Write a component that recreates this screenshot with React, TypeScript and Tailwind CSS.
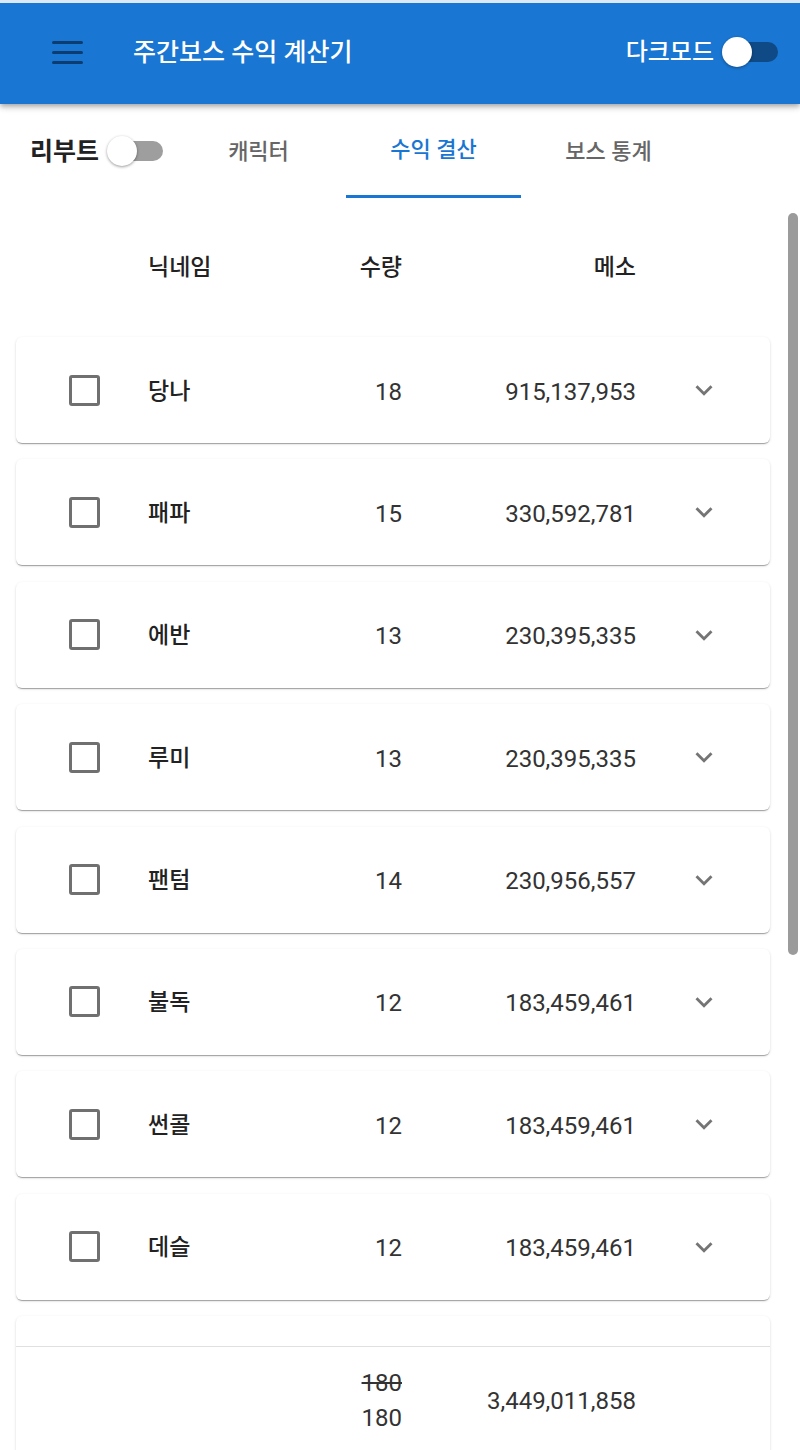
import React from "react";

const rows = [
  { name: "당나", count: 18, meso: "915,137,953" },
  { name: "패파", count: 15, meso: "330,592,781" },
  { name: "에반", count: 13, meso: "230,395,335" },
  { name: "루미", count: 13, meso: "230,395,335" },
  { name: "팬텀", count: 14, meso: "230,956,557" },
  { name: "불독", count: 12, meso: "183,459,461" },
  { name: "썬콜", count: 12, meso: "183,459,461" },
  { name: "데슬", count: 12, meso: "183,459,461" },
];

function Chevron() {
  return (
    <svg width="34" height="34" viewBox="0 0 24 24" className="text-[#757575]">
      <path d="M7.41 8.59 12 13.17l4.59-4.58L18 10l-6 6-6-6z" fill="currentColor" />
    </svg>
  );
}

const cardShadow =
  "shadow-[0_2px_1px_-1px_rgba(0,0,0,0.2),0_1px_1px_0_rgba(0,0,0,0.14),0_1px_3px_0_rgba(0,0,0,0.12)]";

export default function App() {
  return (
    <div
      className="relative w-[800px] h-[1450px] overflow-hidden bg-white text-[#222]"
      style={{ fontFamily: "Roboto, 'Noto Sans CJK KR', sans-serif" }}
    >
      {/* App bar */}
      <div className="relative z-10 h-[104px] bg-[#1976d2] shadow-[0_2px_4px_-1px_rgba(0,0,0,0.2),0_4px_5px_0_rgba(0,0,0,0.14),0_1px_10px_0_rgba(0,0,0,0.12)]">
        <div className="h-[3px] bg-[#dce8f6]" />
        <div className="flex items-center h-[101px] pl-[52px] pr-[22px]">
          <div className="flex flex-col gap-[7px] w-[31px] -mt-[2px]">
            <div className="h-[3px] bg-[#0d3d70] rounded-sm" />
            <div className="h-[3px] bg-[#0d3d70] rounded-sm" />
            <div className="h-[3px] bg-[#0d3d70] rounded-sm" />
          </div>
          <div className="ml-[50px] text-white text-[25px] font-medium leading-none -mt-[2px]">
            주간보스 수익 계산기
          </div>
          <div className="ml-auto flex items-center -mt-[4px]">
            <span className="text-white text-[24px] font-medium leading-none">다크모드</span>
            <div className="relative ml-[8px] w-[56px] h-[30px] flex items-center">
              <div className="absolute left-[4px] right-0 h-[20px] rounded-full bg-[#0f4a86]" />
              <div className="absolute left-0 w-[30px] h-[30px] rounded-full bg-white shadow-[0_1px_3px_rgba(0,0,0,0.35)]" />
            </div>
          </div>
        </div>
      </div>

      {/* Tabs row */}
      <div className="flex items-stretch h-[94px]">
        <div className="flex items-center w-[171px] pl-[30px]">
          <span className="text-[25px] font-bold leading-none text-[#222]">리부트</span>
          <div className="relative ml-[8px] w-[56px] h-[30px] flex items-center">
            <div className="absolute left-[8px] right-0 h-[20px] rounded-full bg-[#9e9e9e]" />
            <div className="absolute left-0 w-[30px] h-[30px] rounded-full bg-white shadow-[0_1px_3px_rgba(0,0,0,0.4)]" />
          </div>
        </div>
        <div className="w-[175px] flex items-center justify-center text-[22px] font-medium text-[#666]">
          캐릭터
        </div>
        <div className="w-[175px] flex flex-col">
          <div className="flex-1 flex items-center justify-center text-[22px] font-medium text-[#1976d2]">
            수익 결산
          </div>
          <div className="h-[3px] bg-[#1976d2]" />
        </div>
        <div className="w-[175px] flex items-center justify-center text-[22px] font-medium text-[#666]">
          보스 통계
        </div>
      </div>

      {/* Column header */}
      <div className="px-[16px] pt-[55px] pb-[54px]">
        <div className="flex items-center h-[30px] text-[23px] font-medium text-[#222]">
          <div className="w-[53px]" />
          <div className="w-[31px]" />
          <div className="ml-[48px] w-[150px]">닉네임</div>
          <div className="w-[104px] text-right">수량</div>
          <div className="w-[234px] text-right">메소</div>
        </div>
      </div>

      {/* Cards */}
      <div className="flex flex-col gap-[16.4px] px-[16px] pr-[30px]">
        {rows.map((r) => (
          <div key={r.name} className={`h-[106px] bg-white rounded-[6px] ${cardShadow} flex items-center`}>
            <div className="w-[53px]" />
            <div className="w-[31px] h-[31px] border-[3px] border-[#707070] rounded-[3px]" />
            <div className="ml-[48px] w-[150px] text-[23px] font-medium leading-none mt-[2px]">{r.name}</div>
            <div className="w-[104px] text-right text-[24px] text-[#333] leading-none mt-[3px]">{r.count}</div>
            <div className="w-[234px] text-right text-[24px] text-[#333] leading-none mt-[3px]">{r.meso}</div>
            <div className="ml-[51px] w-[34px] flex items-center justify-center">
              <Chevron />
            </div>
          </div>
        ))}
        <div className={`h-[200px] bg-white rounded-[6px] ${cardShadow}`}>
          <div className="h-[31px] border-b border-[#e0e0e0]" />
          <div className="flex items-center h-[106px] text-[24px] text-[#333]">
            <div className="w-[53px]" />
            <div className="w-[31px]" />
            <div className="ml-[48px] w-[150px]" />
            <div className="w-[104px] flex flex-col items-end leading-[35px] mt-[2px]">
              <span className="line-through">180</span>
              <span>180</span>
            </div>
            <div className="w-[234px] text-right mt-[2px]">3,449,011,858</div>
          </div>
        </div>
      </div>

      {/* Scroll indicator overlay */}
      <div className="absolute right-[2px] top-[213px] w-[10px] h-[742px] rounded-full bg-[#9b9b9b]" />
    </div>
  );
}
